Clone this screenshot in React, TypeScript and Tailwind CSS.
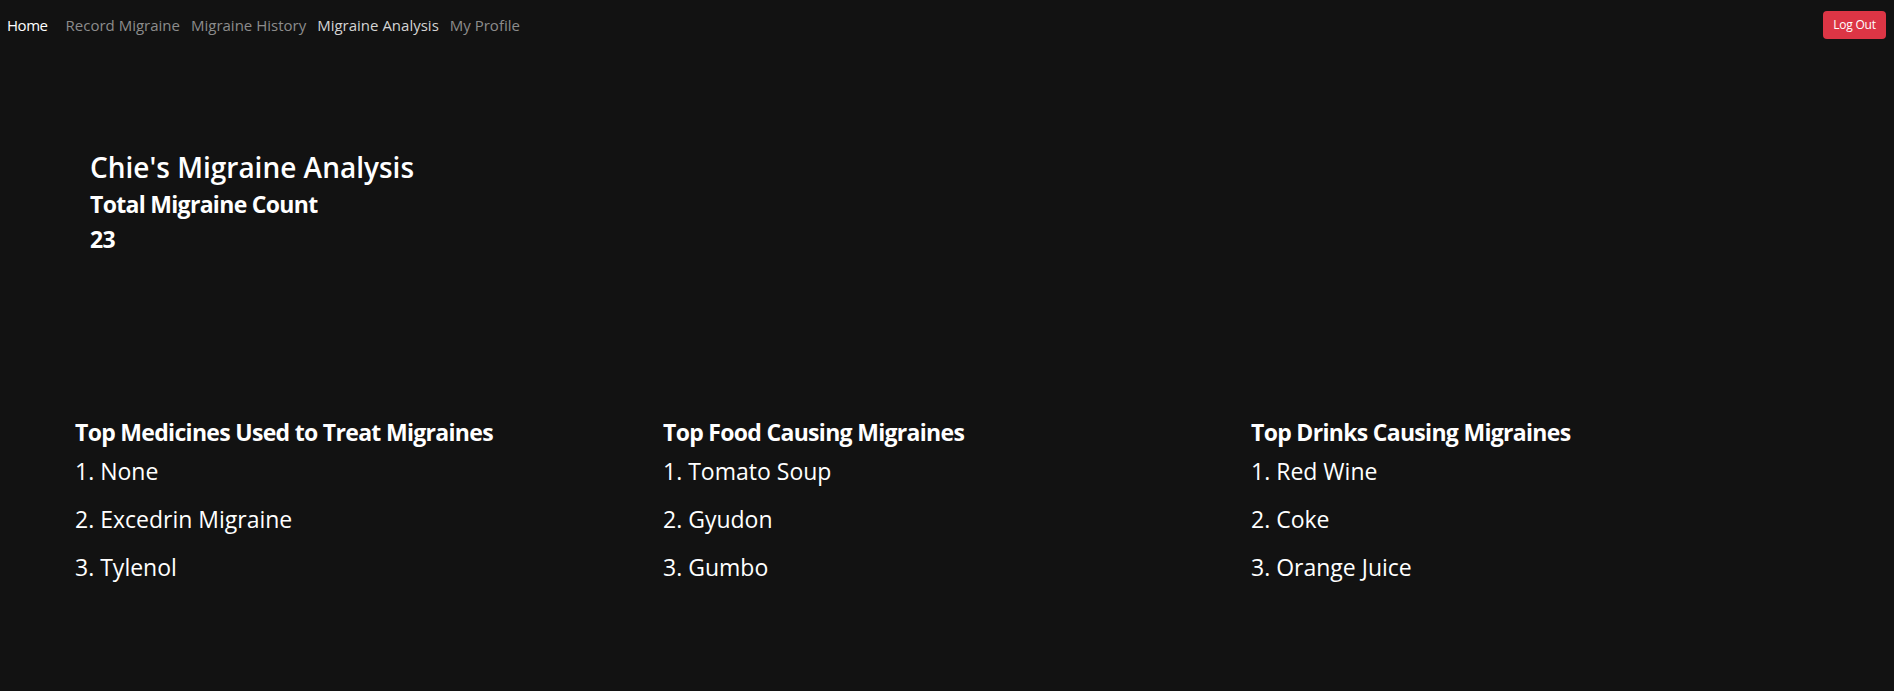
import React from "react";

const columns = [
  {
    title: "Top Medicines Used to Treat Migraines",
    items: ["None", "Excedrin Migraine", "Tylenol"],
  },
  {
    title: "Top Food Causing Migraines",
    items: ["Tomato Soup", "Gyudon", "Gumbo"],
  },
  {
    title: "Top Drinks Causing Migraines",
    items: ["Red Wine", "Coke", "Orange Juice"],
  },
];

export default function App() {
  return (
    <div
      className="min-h-[691px] w-full bg-[#121212] text-white"
      style={{ fontFamily: '"Open Sans", "Noto Sans", sans-serif' }}
    >
      {/* navbar */}
      <nav className="flex h-[50px] items-center justify-between pl-[7px] pr-[8px] text-[15px]">
        <div className="flex items-center">
          <a className="tracking-[-0.03em] text-white">Home</a>
          <div className="ml-[18px] flex items-center gap-[11px]">
            <a className="text-[#8c8c8c]">Record Migraine</a>
            <a className="text-[#8c8c8c]">Migraine History</a>
            <a className="text-[#d4d4d4]">Migraine Analysis</a>
            <a className="text-[#8c8c8c]">My Profile</a>
          </div>
        </div>
        <button className="h-[28px] w-[63px] rounded-[4px] bg-[#dc3545] text-[12px] tracking-[-0.02em] text-white">
          Log Out
        </button>
      </nav>

      {/* summary */}
      <div className="pl-[90px] pt-[100px]">
        <h2 className="text-[28px] font-semibold leading-[34px]">
          Chie's Migraine Analysis
        </h2>
        <h4 className="text-[23px] font-bold leading-[40px] tracking-[-0.03em]">
          Total Migraine Count
        </h4>
        <h4 className="text-[23px] font-bold leading-[30px] tracking-[-0.03em]">23</h4>
      </div>

      {/* top lists */}
      <div className="mt-[163px] grid grid-cols-[588px_588px_588px] pl-[75px]">
        {columns.map((col) => (
          <div key={col.title}>
            <h4 className="text-[23px] font-bold leading-[30px] tracking-[-0.03em]">
              {col.title}
            </h4>
            {col.items.map((item, i) => (
              <p key={item} className="text-[23px] leading-[48px]">
                {i + 1}. {item}
              </p>
            ))}
          </div>
        ))}
      </div>
    </div>
  );
}
